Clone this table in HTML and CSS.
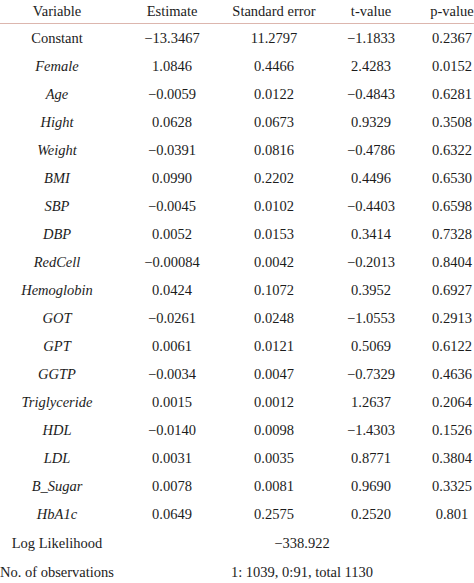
FILE: index.html
```html
<!DOCTYPE html>
<html>
<head>
<meta charset="utf-8">
<link rel="stylesheet" href="styles.css">
</head>
<body>
<div class="table">
  <div class="row head">
    <div class="c">Variable</div><div class="c">Estimate</div><div class="c">Standard error</div><div class="c">t-value</div><div class="c">p-value</div>
  </div>
  <div class="row"><div class="c">Constant</div><div class="c">−13.3467</div><div class="c">11.2797</div><div class="c">−1.1833</div><div class="c">0.2367</div></div>
  <div class="row"><div class="c i">Female</div><div class="c">1.0846</div><div class="c">0.4466</div><div class="c">2.4283</div><div class="c">0.0152</div></div>
  <div class="row"><div class="c i">Age</div><div class="c">−0.0059</div><div class="c">0.0122</div><div class="c">−0.4843</div><div class="c">0.6281</div></div>
  <div class="row"><div class="c i">Hight</div><div class="c">0.0628</div><div class="c">0.0673</div><div class="c">0.9329</div><div class="c">0.3508</div></div>
  <div class="row"><div class="c i">Weight</div><div class="c">−0.0391</div><div class="c">0.0816</div><div class="c">−0.4786</div><div class="c">0.6322</div></div>
  <div class="row"><div class="c i">BMI</div><div class="c">0.0990</div><div class="c">0.2202</div><div class="c">0.4496</div><div class="c">0.6530</div></div>
  <div class="row"><div class="c i">SBP</div><div class="c">−0.0045</div><div class="c">0.0102</div><div class="c">−0.4403</div><div class="c">0.6598</div></div>
  <div class="row"><div class="c i">DBP</div><div class="c">0.0052</div><div class="c">0.0153</div><div class="c">0.3414</div><div class="c">0.7328</div></div>
  <div class="row"><div class="c i">RedCell</div><div class="c">−0.00084</div><div class="c">0.0042</div><div class="c">−0.2013</div><div class="c">0.8404</div></div>
  <div class="row"><div class="c i">Hemoglobin</div><div class="c">0.0424</div><div class="c">0.1072</div><div class="c">0.3952</div><div class="c">0.6927</div></div>
  <div class="row"><div class="c i">GOT</div><div class="c">−0.0261</div><div class="c">0.0248</div><div class="c">−1.0553</div><div class="c">0.2913</div></div>
  <div class="row"><div class="c i">GPT</div><div class="c">0.0061</div><div class="c">0.0121</div><div class="c">0.5069</div><div class="c">0.6122</div></div>
  <div class="row"><div class="c i">GGTP</div><div class="c">−0.0034</div><div class="c">0.0047</div><div class="c">−0.7329</div><div class="c">0.4636</div></div>
  <div class="row"><div class="c i">Triglyceride</div><div class="c">0.0015</div><div class="c">0.0012</div><div class="c">1.2637</div><div class="c">0.2064</div></div>
  <div class="row"><div class="c i">HDL</div><div class="c">−0.0140</div><div class="c">0.0098</div><div class="c">−1.4303</div><div class="c">0.1526</div></div>
  <div class="row"><div class="c i">LDL</div><div class="c">0.0031</div><div class="c">0.0035</div><div class="c">0.8771</div><div class="c">0.3804</div></div>
  <div class="row"><div class="c i">B_Sugar</div><div class="c">0.0078</div><div class="c">0.0081</div><div class="c">0.9690</div><div class="c">0.3325</div></div>
  <div class="row"><div class="c i">HbA1c</div><div class="c">0.0649</div><div class="c">0.2575</div><div class="c">0.2520</div><div class="c">0.801</div></div>
  <div class="row tall"><div class="c">Log Likelihood</div><div class="c span">−338.922</div></div>
  <div class="row tall"><div class="c">No. of observations</div><div class="c span">1: 1039, 0:91, total 1130</div></div>
</div>
</body>
</html>
```

FILE: styles.css
```css
html, body {
  margin: 0;
  padding: 0;
  background: #ffffff;
  overflow: hidden;
}
body {
  width: 474px;
  height: 583px;
  font-family: "Liberation Serif", "Times New Roman", serif;
  font-size: 14.5px;
  color: #1c1c1c;
}
.table {
  width: 496px;
  margin-left: -8px;
}
.row {
  display: grid;
  grid-template-columns: 130px 100px 104px 90px 72px;
  height: 28px;
  align-items: center;
}
.row.head {
  border-bottom: 1.5px solid #dcb6ae;
  align-items: start;
  padding-top: 3px;
  box-sizing: border-box;
  height: 24px;
}
.row.tall {
  height: 29px;
  padding-top: 1px;
  box-sizing: border-box;
}
.c {
  text-align: center;
  white-space: nowrap;
  line-height: 16px;
}
.i {
  font-style: italic;
}
.span {
  grid-column: 2 / 6;
  padding-right: 6px;
}
```
